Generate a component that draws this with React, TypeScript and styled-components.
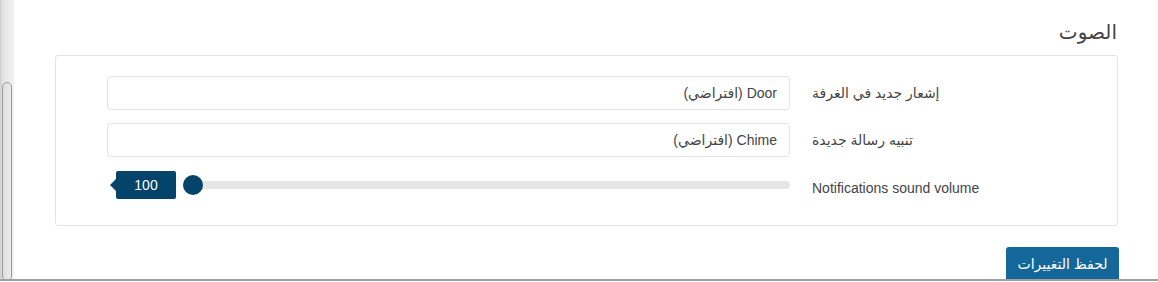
import React from "react";
import styled, { createGlobalStyle } from "styled-components";

const Global = createGlobalStyle`
  html, body { margin: 0; padding: 0; background: #fff; overflow: hidden; }
  body { font-family: "Liberation Sans", "DejaVu Sans", Arial, sans-serif; color: #444; }
  * { box-sizing: border-box; }
`;

const Frame = styled.div`
  width: 1158px;
  height: 282px;
  display: flex;
  flex-direction: column;
`;

const Viewport = styled.div`
  height: 279px;
  display: flex;
  flex-direction: row;
  direction: rtl;
  overflow: hidden;
`;

const BottomRule = styled.div`
  height: 2px;
  background: #a0a0a0;
`;

const Scrollbar = styled.div`
  width: 14px;
  flex: none;
  background: linear-gradient(to right, #cfcfcf 0px, #e4e4e4 3px, #f2f2f2 14px);
  padding-top: 82px;
  display: flex;
  justify-content: center;
  direction: ltr;
`;

const Thumb = styled.div`
  width: 10px;
  height: 199px;
  margin-left: -1px;
  border: 1px solid #9a9a9a;
  border-radius: 5px;
  background: linear-gradient(to right, #dedede, #ececec);
`;

const Content = styled.main`
  flex: 1;
  padding: 20px 40px 0 41px;
`;

const Heading = styled.h2`
  margin: 0 0 11px;
  font-size: 20px;
  line-height: 24px;
  font-weight: normal;
  color: #444;
  padding-right: 1px;
`;

const Panel = styled.section`
  border: 1px solid #e4e4e4;
  border-radius: 3px;
  padding: 20px 20px 21px 51px;
  display: flex;
  flex-direction: column;
  gap: 13px;
`;

const Row = styled.div<{ $shift?: number }>`
  display: flex;
  flex-direction: row;
  align-items: center;
  gap: 20px;
  height: 34px;
  padding-top: ${(p) => p.$shift ?? 0}px;
`;

const Label = styled.label`
  width: 287px;
  flex: none;
  text-align: left;
  padding-left: 2px;
  font-size: 14px;
  color: #444;
`;

const Field = styled.div`
  flex: 1;
  height: 34px;
  border: 1px solid #e4e4e4;
  border-radius: 4px;
  padding: 0 12px;
  display: flex;
  align-items: center;
  font-size: 14px;
  color: #444;
`;

const SliderField = styled.div`
  flex: 1;
  display: flex;
  align-items: center;
  padding-left: 76px;
  margin-top: -6px;
`;

const Track = styled.div`
  flex: 1;
  height: 8px;
  border-radius: 4px;
  background: #e6e6e6;
  position: relative;
  display: flex;
  justify-content: flex-end;
  align-items: center;
  direction: rtl;
`;

const Knob = styled.div`
  width: 20px;
  height: 20px;
  border-radius: 50%;
  background: #04436a;
  position: relative;
  flex: none;
`;

const Bubble = styled.div`
  position: absolute;
  right: calc(100% + 7px);
  top: 50%;
  transform: translateY(-50%);
  width: 60px;
  height: 28px;
  background: #04436a;
  color: #fff;
  border-radius: 2px;
  font-size: 14px;
  display: flex;
  align-items: center;
  justify-content: center;
  direction: ltr;
  &::before {
    content: "";
    position: absolute;
    left: -6px;
    top: 50%;
    margin-top: -6px;
    border-top: 6px solid transparent;
    border-bottom: 6px solid transparent;
    border-right: 6px solid #04436a;
  }
`;

const Actions = styled.div`
  display: flex;
  justify-content: flex-start;
  margin-top: 21px;
  margin-right: -1px;
`;

const SaveButton = styled.button`
  height: 34px;
  width: 113px;
  border: none;
  border-radius: 3px;
  background: #13679a;
  color: #fff;
  font-family: "Liberation Sans", "DejaVu Sans", Arial, sans-serif;
  font-size: 14px;
  padding: 0;
  cursor: pointer;
`;

export default function App() {
  return (
    <>
      <Global />
      <Frame>
        <Viewport>
          <Content>
            <Heading>الصوت</Heading>
            <Panel>
              <Row>
                <Label>إشعار جديد في الغرفة</Label>
                <Field>Door (افتراضي)</Field>
              </Row>
              <Row>
                <Label>تنبيه رسالة جديدة</Label>
                <Field>Chime (افتراضي)</Field>
              </Row>
              <Row $shift={1}>
                <Label>Notifications sound volume</Label>
                <SliderField>
                  <Track>
                    <Knob>
                      <Bubble>100</Bubble>
                    </Knob>
                  </Track>
                </SliderField>
              </Row>
            </Panel>
            <Actions>
              <SaveButton>لحفظ التغييرات</SaveButton>
            </Actions>
          </Content>
          <Scrollbar>
            <Thumb />
          </Scrollbar>
        </Viewport>
        <BottomRule />
      </Frame>
    </>
  );
}
